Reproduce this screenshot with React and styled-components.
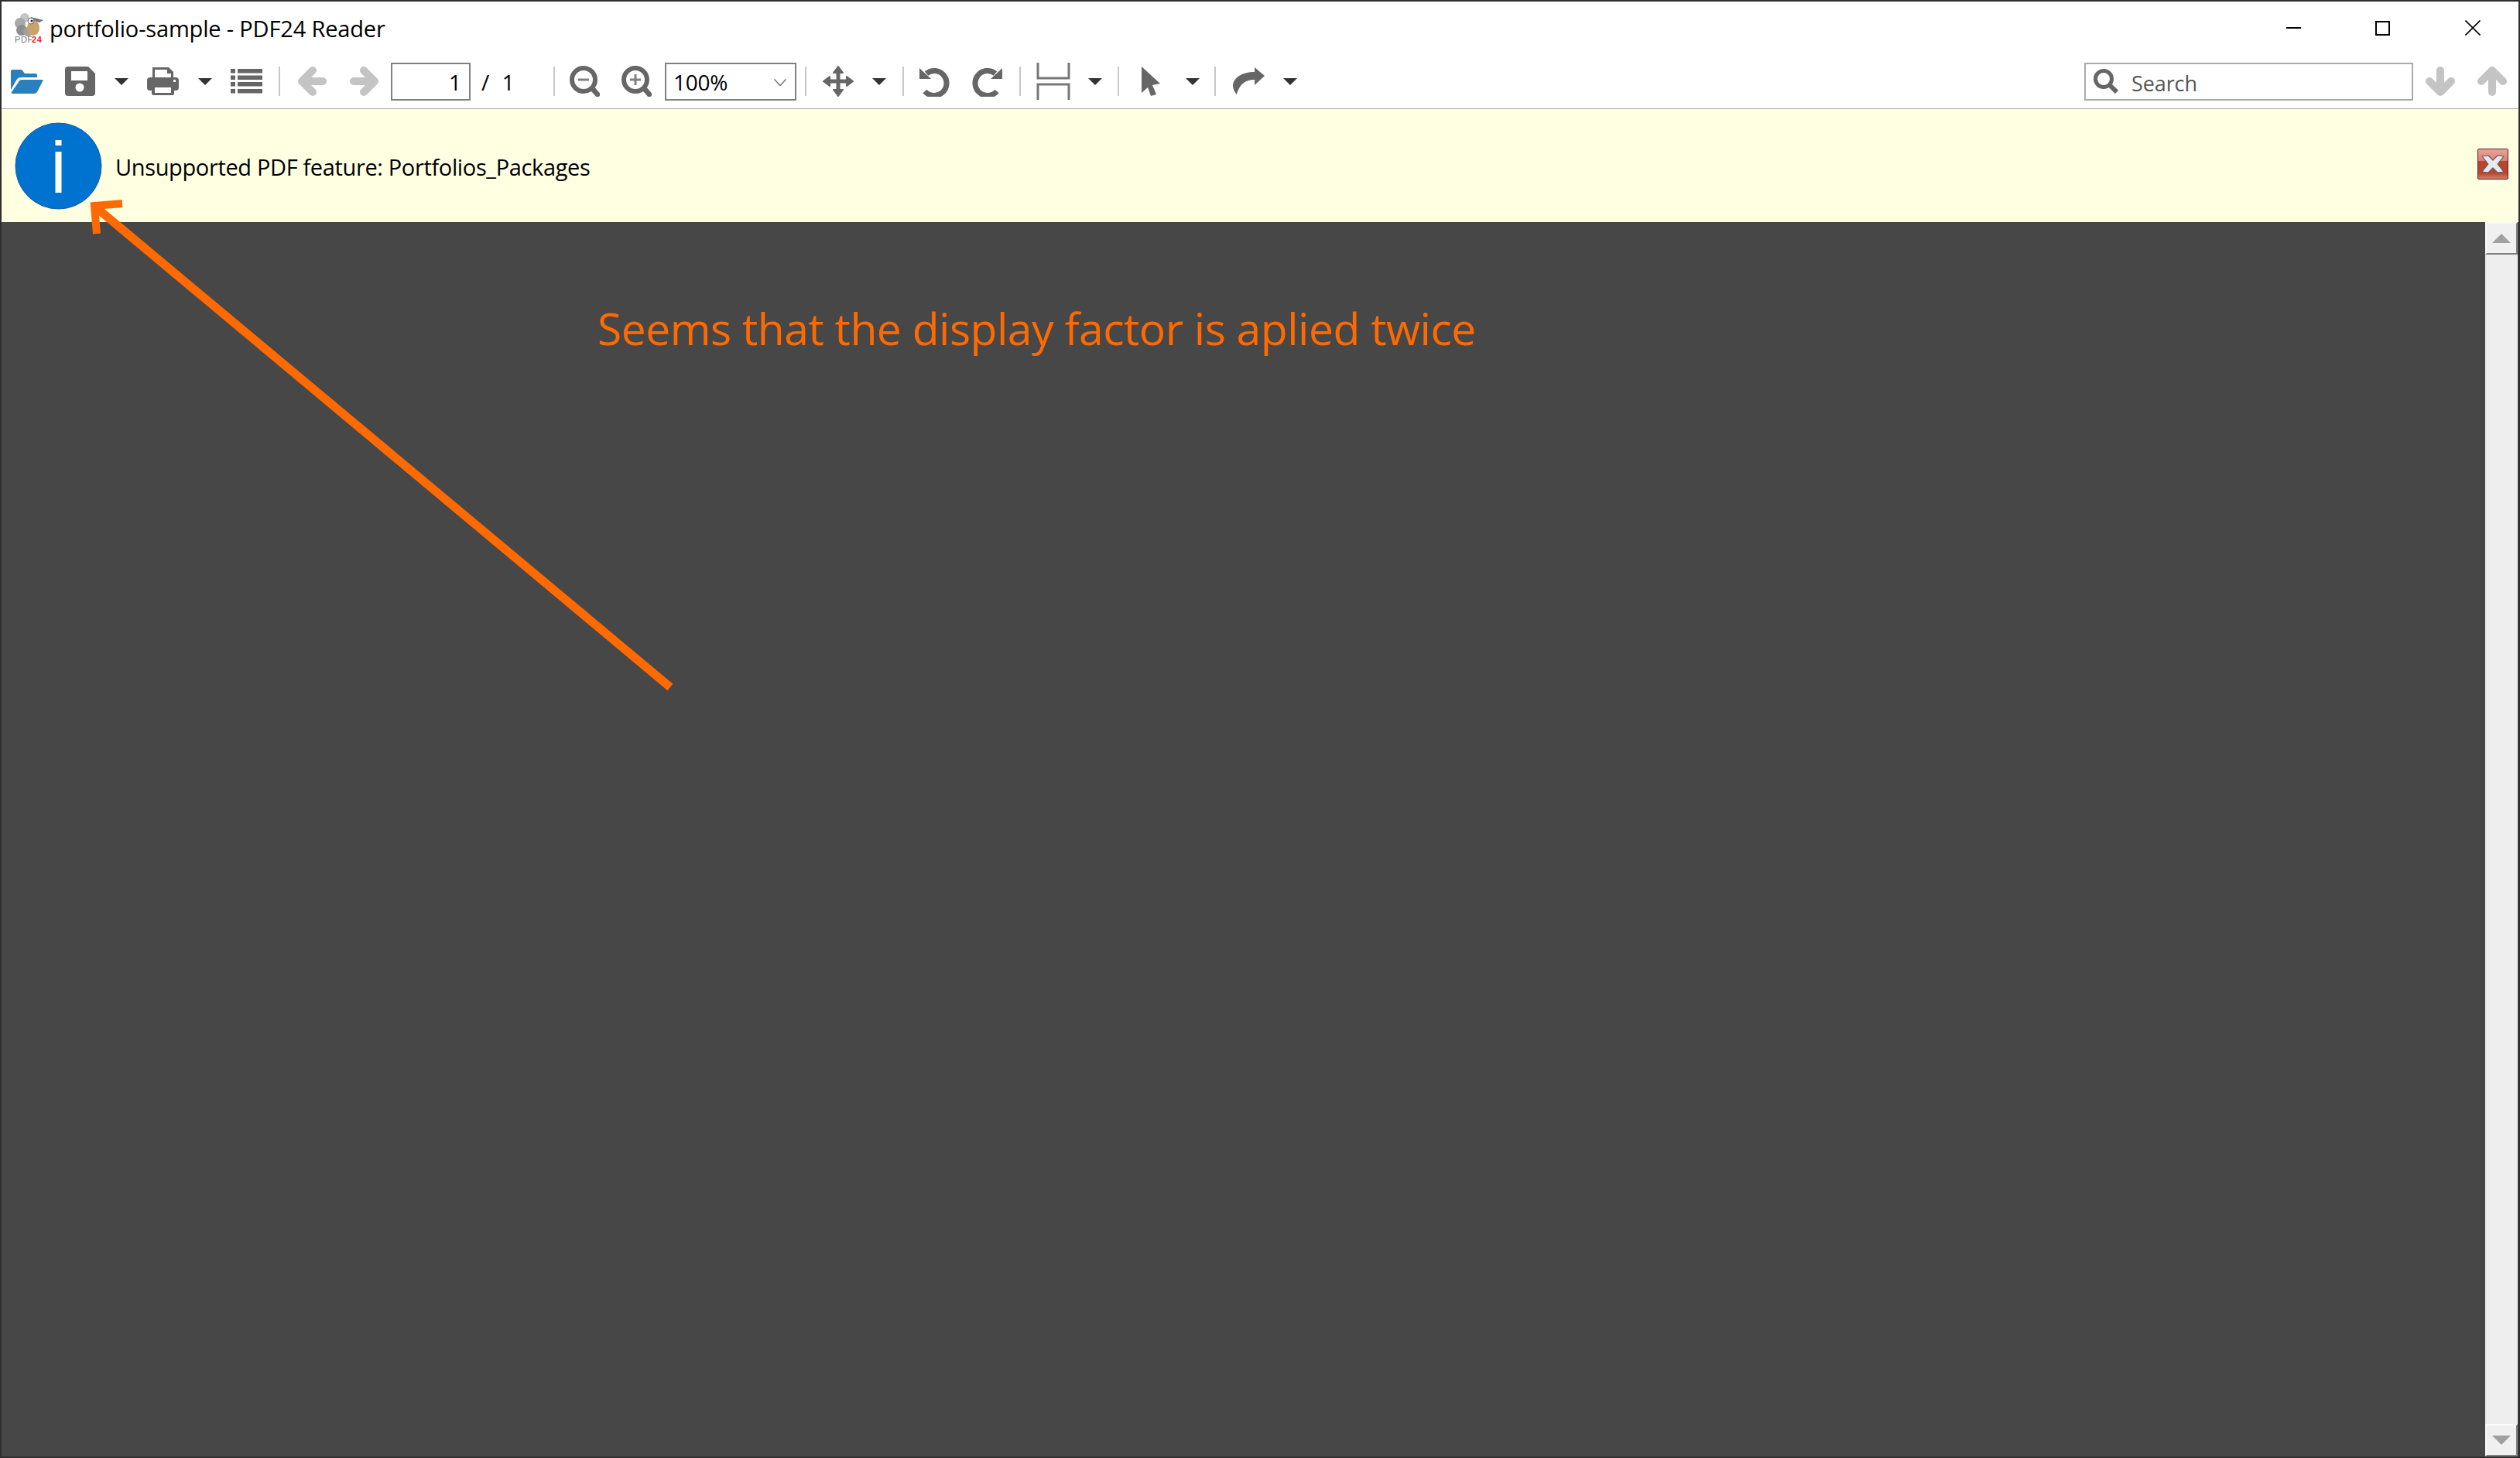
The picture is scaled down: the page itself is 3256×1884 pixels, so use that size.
import styled, { createGlobalStyle } from "styled-components";

const UI_FONT = `"Open Sans", "Noto Sans", sans-serif`;
const ICON_GREY = "#666666";
const OFF_GREY = "#c4c4c4";

const GlobalStyle = createGlobalStyle`
  html, body {
    margin: 0;
    padding: 0;
    background: #2e2e2e;
  }
  * {
    box-sizing: border-box;
  }
`;

const Window = styled.div`
  position: relative;
  width: 3256px;
  height: 1884px;
  display: flex;
  flex-direction: column;
  padding: 2px 2px 2px 2px;
  background: #2e2e2e;
  overflow: hidden;
  font-family: ${UI_FONT};
`;

const TitleBar = styled.div`
  height: 68px;
  flex: none;
  display: flex;
  align-items: center;
  background: #fff;
  color: #000;
  padding-left: 16px;
`;

const TitleText = styled.div`
  margin-left: 6px;
  font-size: 29px;
  letter-spacing: -0.17px;
  white-space: nowrap;
`;

const WindowControls = styled.div`
  margin-left: auto;
  display: flex;
  align-items: center;
  padding-right: 49px;
`;

const Minimize = styled.div`
  width: 19px;
  height: 2px;
  background: #000;
`;

const Maximize = styled.div`
  margin-left: 96px;
  width: 19px;
  height: 19px;
  border: 2px solid #000;
`;

const CloseGlyph = styled.svg`
  margin-left: 97px;
  width: 20px;
  height: 20px;
  display: block;
`;

const Toolbar = styled.div`
  height: 71px;
  flex: none;
  display: flex;
  align-items: center;
  background: #fff;
  border-bottom: 1px solid #aaaaaa;
`;

const Slot = styled.div`
  flex: none;
  display: flex;
  margin-left: ${(p) => p.$ml}px;
  svg {
    display: block;
  }
`;

const Caret = styled.div`
  flex: none;
  width: 0;
  height: 0;
  margin-left: ${(p) => p.$ml}px;
  border-left: 9px solid transparent;
  border-right: 9px solid transparent;
  border-top: 9px solid #333;
`;

const Separator = styled.div`
  flex: none;
  width: 2px;
  height: 38px;
  margin-left: ${(p) => p.$ml}px;
  background: #c8c8c8;
`;

const PageInput = styled.div`
  flex: none;
  width: 103px;
  height: 49px;
  margin-left: ${(p) => p.$ml}px;
  display: flex;
  align-items: center;
  justify-content: flex-end;
  padding: 2px 10px 0 0;
  border: 2px solid #808080;
  font-size: 28px;
`;

const PageCount = styled.div`
  flex: none;
  width: 93px;
  margin-left: 14px;
  padding-top: 2px;
  font-size: 28px;
  word-spacing: 1px;
  white-space: pre;
`;

const ZoomCombo = styled.div`
  flex: none;
  width: 170px;
  height: 49px;
  margin-left: ${(p) => p.$ml}px;
  display: flex;
  align-items: center;
  justify-content: space-between;
  padding: 2px 11px 0 9px;
  border: 2px solid #808080;
  font-size: 28px;
  letter-spacing: -0.3px;
`;

const Spacer = styled.div`
  flex: 1;
`;

const SearchBox = styled.div`
  flex: none;
  width: 425px;
  height: 49px;
  display: flex;
  align-items: center;
  padding-left: 10px;
  border: 2px solid #aaaaaa;
`;

const SearchLabel = styled.div`
  margin-left: 17px;
  padding-top: 5px;
  font-size: 27px;
  letter-spacing: -0.1px;
  color: #555;
`;

const InfoBar = styled.div`
  height: 146px;
  flex: none;
  display: flex;
  align-items: center;
  padding: 0 13px 0 17px;
  background: #ffffe1;
`;

const InfoMessage = styled.div`
  margin-left: 17px;
  padding-top: 2px;
  font-size: 29px;
  letter-spacing: -0.36px;
  color: #000;
`;

const DismissSlot = styled.div`
  margin-left: auto;
`;

const Viewer = styled.div`
  flex: 1;
  display: flex;
  background: #474747;
  min-height: 0;
`;

const PageArea = styled.div`
  flex: 1;
`;

const Scrollbar = styled.div`
  width: 42px;
  margin-right: 1px;
  flex: none;
  display: flex;
  flex-direction: column;
  justify-content: space-between;
  background: #eeeeee;
`;

const ScrollButton = styled.div`
  height: 42px;
  display: flex;
  align-items: center;
  justify-content: center;
  background: #f0f0f0;
  border-style: solid;
  border-width: 2px;
  border-color: #fafafa #808080 #808080 #fafafa;
`;

const ScrollArrow = styled.div`
  width: 0;
  height: 0;
  border-left: 12px solid transparent;
  border-right: 12px solid transparent;
  ${(p) => (p.$up ? "border-bottom" : "border-top")}: 12px solid #a0a0a0;
`;

const Remark = styled.div`
  position: absolute;
  left: 772px;
  top: 385px;
  font-size: 57px;
  letter-spacing: -0.5px;
  color: #ff6a00;
  white-space: nowrap;
`;

const Pointer = styled.svg`
  position: absolute;
  left: 0;
  top: 0;
  pointer-events: none;
`;

const AppLogo = () => (
  <svg width="40" height="40" viewBox="0 0 40 40">
    <circle cx="14" cy="7" r="6" fill="#c4c4c4" />
    <circle cx="8" cy="14" r="7" fill="#a8a8a8" />
    <circle cx="10" cy="23" r="7" fill="#8e8e8e" />
    <circle cx="18" cy="25" r="6" fill="#a0a0a0" />
    <path d="M22 6 L38 10 L33 13 L22 10 Z" fill="#777" />
    <ellipse cx="25" cy="20" rx="8" ry="10" fill="#c9a36b" />
    <circle cx="22" cy="11" r="4" fill="#fff" stroke="#666" strokeWidth="1" />
    <circle cx="23" cy="11" r="1.5" fill="#222" />
    <text x="1" y="39" fontFamily="Liberation Sans, sans-serif" fontSize="11" letterSpacing="0.6" fill="#777">PDF</text>
    <text x="23" y="39" fontFamily="Liberation Sans, sans-serif" fontSize="11" fontWeight="700" letterSpacing="0.6" fill="#f02030">24</text>
  </svg>
);

const FolderIcon = () => (
  <svg width="44" height="34" viewBox="0 0 44 34" fill="#2a80bf">
    <path d="M1 4 Q1 2 3 2 H15 L19 7 H33 Q35 7 35 9 V12 H14 Q10 12 8 16 L1 28 Z" />
    <path d="M11 18 Q12 15 15 15 H43 L36 29 Q34 33 31 33 H3 Q1 33 2 31 Z" />
  </svg>
);

const SaveIcon = () => (
  <svg width="40" height="40" viewBox="0 0 40 40">
    <path d="M4 1 H30 L39 10 V35 Q39 39 35 39 H4 Q0 39 0 35 V5 Q0 1 4 1 Z" fill={ICON_GREY} />
    <rect x="8" y="7" width="21" height="12" fill="#fff" />
    <circle cx="19" cy="28" r="5.5" fill="#fff" />
  </svg>
);

const PrintIcon = () => (
  <svg width="41" height="40" viewBox="0 0 41 40">
    <path d="M7 2 H28 L34 8 V18 H7 Z" fill={ICON_GREY} />
    <path d="M10 5 H26 V10 H31 V15 H10 Z" fill="#fff" />
    <rect x="0" y="15" width="41" height="17" rx="4" fill={ICON_GREY} />
    <rect x="6" y="25" width="29" height="13" rx="2" fill={ICON_GREY} />
    <rect x="10" y="28" width="21" height="7" fill="#fff" />
    <rect x="34" y="18" width="3" height="3" fill="#fff" />
  </svg>
);

const ListIcon = () => (
  <svg width="41" height="34" viewBox="0 0 41 34" fill={ICON_GREY}>
    {[1, 9.5, 18, 27].map((y) => (
      <g key={y}>
        <rect x="0" y={y} width="6" height="5.5" />
        <rect x="9" y={y} width="32" height="5.5" />
      </g>
    ))}
  </svg>
);

const ArrowIcon = ({ d, color }) => (
  <svg width="40" height="40" viewBox="0 0 40 40" fill="none" stroke={color} strokeWidth="10" strokeLinecap="round" strokeLinejoin="round">
    <path d={d} />
  </svg>
);

const ZoomIcon = ({ plus }) => (
  <svg width="40" height="40" viewBox="0 0 40 40" fill="none" stroke={ICON_GREY}>
    <circle cx="19" cy="18" r="15" strokeWidth="6" />
    <path d="M30 29 L37 37" strokeWidth="6.5" strokeLinecap="round" />
    <path d={plus ? "M12 18 H26 M19 11 V25" : "M12 18 H26"} strokeWidth="3" stroke="#808080" />
  </svg>
);

const MoveIcon = () => (
  <svg width="40" height="40" viewBox="0 0 40 40" fill={ICON_GREY} stroke={ICON_GREY} strokeLinejoin="round">
    <path d="M20 6 V34 M6 20 H34" strokeWidth="5" fill="none" />
    <path d="M20 1 L26 9 H14 Z M20 39 L26 31 H14 Z M1 20 L9 14 V26 Z M39 20 L31 14 V26 Z" strokeWidth="2" />
  </svg>
);

const RotateIcon = ({ flip }) => (
  <svg width="40" height="40" viewBox="0 0 40 40" style={flip ? { transform: "scaleX(-1)" } : undefined}>
    <path d="M9 10 A16 16 0 1 1 7 33" fill="none" stroke={ICON_GREY} strokeWidth="7" />
    <path d="M0 3 V17 H15 Z" fill={ICON_GREY} />
  </svg>
);

const FitIcon = () => (
  <svg width="44" height="48" viewBox="0 0 44 48" fill="none" stroke="#777" strokeWidth="3">
    <path d="M2 0 V20 H42 V0" />
    <path d="M2 48 V28 H42 V48" />
  </svg>
);

const CursorIcon = () => (
  <svg width="28" height="40" viewBox="0 0 28 40" fill={ICON_GREY}>
    <path d="M1 1 L25 23 L15 25 L20 37 L13 39 L9 28 L1 35 Z" />
  </svg>
);

const ShareIcon = () => (
  <svg width="42" height="40" viewBox="0 0 42 40" fill={ICON_GREY}>
    <path d="M28 2 L41 13 L28 25 V18 C18 18 9 22 5 37 C1 33 0 28 0 25 C1 15 12 8 28 8 Z" />
  </svg>
);

const SearchIcon = () => (
  <svg width="32" height="32" viewBox="0 0 32 32" fill="none" stroke={ICON_GREY}>
    <circle cx="13" cy="13" r="10.5" strokeWidth="5" />
    <path d="M21 21 L30 30" strokeWidth="6" />
  </svg>
);

const InfoBadge = () => (
  <svg width="113" height="113" viewBox="0 0 113 113">
    <circle cx="56.5" cy="56.5" r="55.5" fill="#0073d1" stroke="#0f5c9c" strokeWidth="1" />
    <rect x="52.5" y="23" width="8" height="7" fill="#fff" />
    <rect x="52.5" y="38" width="8" height="53" fill="#fff" />
  </svg>
);

const DismissIcon = () => (
  <svg width="40" height="40" viewBox="0 0 40 40">
    <defs>
      <linearGradient id="dismiss" x1="0" y1="0" x2="0" y2="1">
        <stop offset="0" stopColor="#eba696" />
        <stop offset="0.39" stopColor="#d9806e" />
        <stop offset="0.4" stopColor="#b9452c" />
        <stop offset="0.8" stopColor="#b9452c" />
        <stop offset="1" stopColor="#d9806e" />
      </linearGradient>
    </defs>
    <rect x="0.5" y="0.5" width="39" height="39" rx="1.5" fill="url(#dismiss)" stroke="#5a2038" />
    <path d="M6 10 L14 9 L20 15 L26 9 L34 10 L26 20 L34 30 L26 31 L20 25 L14 31 L6 30 L14 20 Z" fill="#e8e8ea" stroke="#5e5e78" strokeWidth="1.2" strokeLinejoin="round" />
  </svg>
);

const App = () => {
  return (
    <Window>
      <GlobalStyle />
      <TitleBar>
        <AppLogo />
        <TitleText>portfolio-sample - PDF24 Reader</TitleText>
        <WindowControls>
          <Minimize />
          <Maximize />
          <CloseGlyph viewBox="0 0 20 20" fill="none" stroke="#000" strokeWidth="1.6">
            <path d="M0.5 0.5 L19.5 19.5 M19.5 0.5 L0.5 19.5" />
          </CloseGlyph>
        </WindowControls>
      </TitleBar>

      <Toolbar>
        <Slot $ml={11}><FolderIcon /></Slot>
        <Slot $ml={27}><SaveIcon /></Slot>
        <Caret $ml={24} />
        <Slot $ml={24}><PrintIcon /></Slot>
        <Caret $ml={25} />
        <Slot $ml={24}><ListIcon /></Slot>
        <Separator $ml={21} />
        <Slot $ml={22}><ArrowIcon color={OFF_GREY} d="M6 20 H33 M20 6 L6 20 L20 34" /></Slot>
        <Slot $ml={26}><ArrowIcon color={OFF_GREY} d="M34 20 H7 M20 6 L34 20 L20 34" /></Slot>
        <PageInput $ml={15}>1</PageInput>
        <PageCount>{"/  1"}</PageCount>
        <Separator $ml={0} />
        <Slot $ml={18}><ZoomIcon /></Slot>
        <Slot $ml={27}><ZoomIcon plus /></Slot>
        <ZoomCombo $ml={17}>
          100%
          <svg width="16" height="9" viewBox="0 0 16 9" fill="none" stroke="#666" strokeWidth="1.2">
            <path d="M0.5 0.5 L8 8.5 L15.5 0.5" />
          </svg>
        </ZoomCombo>
        <Separator $ml={11} />
        <Slot $ml={21}><MoveIcon /></Slot>
        <Caret $ml={24} />
        <Separator $ml={21} />
        <Slot $ml={20}><RotateIcon /></Slot>
        <Slot $ml={27}><RotateIcon flip /></Slot>
        <Separator $ml={22} />
        <Slot $ml={20}><FitIcon /></Slot>
        <Caret $ml={23} />
        <Separator $ml={20} />
        <Slot $ml={28}><CursorIcon /></Slot>
        <Caret $ml={30} />
        <Separator $ml={19} />
        <Slot $ml={22}><ShareIcon /></Slot>
        <Caret $ml={23} />
        <Spacer />
        <SearchBox>
          <SearchIcon />
          <SearchLabel>Search</SearchLabel>
        </SearchBox>
        <Slot $ml={15}><ArrowIcon color={OFF_GREY} d="M20 6 V33 M6 20 L20 34 L34 20" /></Slot>
        <Slot $ml={27}><ArrowIcon color={OFF_GREY} d="M20 34 V7 M6 20 L20 6 L34 20" /></Slot>
        <Slot $ml={14} />
      </Toolbar>

      <InfoBar>
        <InfoBadge />
        <InfoMessage>Unsupported PDF feature: Portfolios_Packages</InfoMessage>
        <DismissSlot><DismissIcon /></DismissSlot>
      </InfoBar>

      <Viewer>
        <PageArea />
        <Scrollbar>
          <ScrollButton><ScrollArrow $up /></ScrollButton>
          <ScrollButton><ScrollArrow /></ScrollButton>
        </Scrollbar>
      </Viewer>

      <Remark>Seems that the display factor is aplied twice</Remark>
      <Pointer width="3256" height="1884" viewBox="0 0 3256 1884" fill="none" stroke="#ff6a00">
        <path d="M866 888 L124 268" strokeWidth="11" />
        <path d="M158 263 L122 266 L125 302" strokeWidth="10" strokeLinejoin="miter" />
      </Pointer>
    </Window>
  );
};

export default App;
